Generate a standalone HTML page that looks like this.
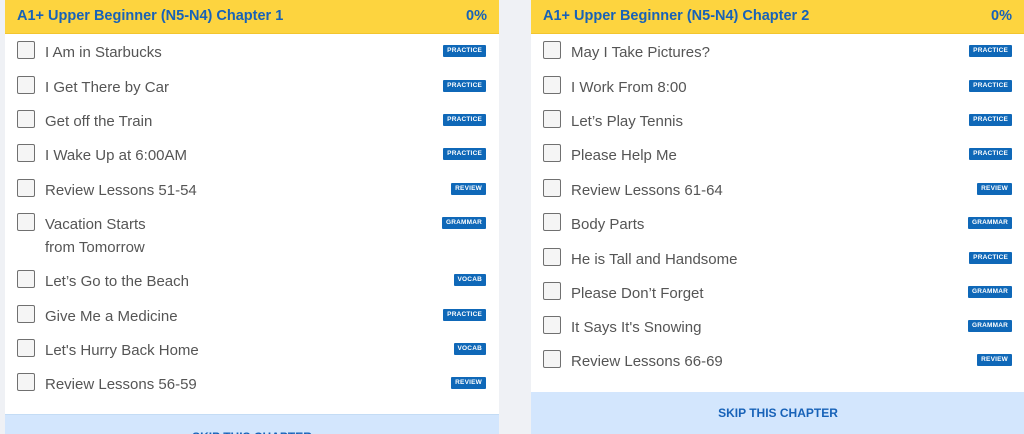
<!DOCTYPE html><html style="width:1024px;height:434px;overflow:hidden"><head><style>
body{margin:0;width:1024px;height:434px;background:#eff1f5;overflow:hidden;font-family:"Liberation Sans",sans-serif;position:relative}
.p{position:absolute;top:0;background:#fff;height:434px;overflow:hidden}
.h{position:absolute;left:0;right:0;top:0;height:33px;background:#fdd43f;border-bottom:1px solid #f3c52e;color:#1762b8;font-weight:bold;font-size:14.5px;line-height:33px}
.h .t{position:absolute;left:12px}.h .r{position:absolute;right:12px}
.row{position:absolute;left:0;right:0}
.cb{position:absolute;left:12px;width:16px;height:16px;border:1.5px solid #707070;border-radius:2px;background:#f5f5f5}
.tx{position:absolute;left:40px;font-size:15px;color:#555;line-height:23px}
.b{position:absolute;background:#0f68b8;color:#fff;font-size:6.5px;font-weight:bold;height:12px;line-height:12px;padding:0 4px;border-radius:1px;letter-spacing:.2px}
.sk{position:absolute;left:0;right:0;background:#d3e6fd;color:#1762b8;font-weight:bold;font-size:12px;text-align:center}
</style></head><body>
<div class="p" style="left:5px;width:494px">
<div class="h"><span class="t">A1+ Upper Beginner (N5-N4) Chapter 1</span><span class="r">0%</span></div>
<div class="row" style="top:41px"><div class="cb"></div><div class="tx" style="top:0px">I Am in Starbucks</div><div class="b" style="right:13px;top:4px">PRACTICE</div></div>
<div class="row" style="top:76px"><div class="cb"></div><div class="tx" style="top:0px">I Get There by Car</div><div class="b" style="right:13px;top:4px">PRACTICE</div></div>
<div class="row" style="top:110px"><div class="cb"></div><div class="tx" style="top:0px">Get off the Train</div><div class="b" style="right:13px;top:4px">PRACTICE</div></div>
<div class="row" style="top:144px"><div class="cb"></div><div class="tx" style="top:0px">I Wake Up at 6:00AM</div><div class="b" style="right:13px;top:4px">PRACTICE</div></div>
<div class="row" style="top:179px"><div class="cb"></div><div class="tx" style="top:0px">Review Lessons 51-54</div><div class="b" style="right:13px;top:4px">REVIEW</div></div>
<div class="row" style="top:213px"><div class="cb"></div><div class="tx" style="top:0px">Vacation Starts<br>from Tomorrow</div><div class="b" style="right:13px;top:4px">GRAMMAR</div></div>
<div class="row" style="top:270px"><div class="cb"></div><div class="tx" style="top:0px">Let’s Go to the Beach</div><div class="b" style="right:13px;top:4px">VOCAB</div></div>
<div class="row" style="top:305px"><div class="cb"></div><div class="tx" style="top:0px">Give Me a Medicine</div><div class="b" style="right:13px;top:4px">PRACTICE</div></div>
<div class="row" style="top:339px"><div class="cb"></div><div class="tx" style="top:0px">Let's Hurry Back Home</div><div class="b" style="right:13px;top:4px">VOCAB</div></div>
<div class="row" style="top:373px"><div class="cb"></div><div class="tx" style="top:0px">Review Lessons 56-59</div><div class="b" style="right:13px;top:4px">REVIEW</div></div>
<div class="sk" style="top:414px;height:30px;border-top:1px solid #c4dcf5;line-height:44px">SKIP THIS CHAPTER</div>
</div>
<div class="p" style="left:531px;width:494px">
<div class="h"><span class="t">A1+ Upper Beginner (N5-N4) Chapter 2</span><span class="r" style="right:13px">0%</span></div>
<div class="row" style="top:41px"><div class="cb"></div><div class="tx" style="top:0px">May I Take Pictures?</div><div class="b" style="right:13px;top:4px">PRACTICE</div></div>
<div class="row" style="top:76px"><div class="cb"></div><div class="tx" style="top:0px">I Work From 8:00</div><div class="b" style="right:13px;top:4px">PRACTICE</div></div>
<div class="row" style="top:110px"><div class="cb"></div><div class="tx" style="top:0px">Let’s Play Tennis</div><div class="b" style="right:13px;top:4px">PRACTICE</div></div>
<div class="row" style="top:144px"><div class="cb"></div><div class="tx" style="top:0px">Please Help Me</div><div class="b" style="right:13px;top:4px">PRACTICE</div></div>
<div class="row" style="top:179px"><div class="cb"></div><div class="tx" style="top:0px">Review Lessons 61-64</div><div class="b" style="right:13px;top:4px">REVIEW</div></div>
<div class="row" style="top:213px"><div class="cb"></div><div class="tx" style="top:0px">Body Parts</div><div class="b" style="right:13px;top:4px">GRAMMAR</div></div>
<div class="row" style="top:248px"><div class="cb"></div><div class="tx" style="top:0px">He is Tall and Handsome</div><div class="b" style="right:13px;top:4px">PRACTICE</div></div>
<div class="row" style="top:282px"><div class="cb"></div><div class="tx" style="top:0px">Please Don’t Forget</div><div class="b" style="right:13px;top:4px">GRAMMAR</div></div>
<div class="row" style="top:316px"><div class="cb"></div><div class="tx" style="top:0px">It Says It's Snowing</div><div class="b" style="right:13px;top:4px">GRAMMAR</div></div>
<div class="row" style="top:350px"><div class="cb"></div><div class="tx" style="top:0px">Review Lessons 66-69</div><div class="b" style="right:13px;top:4px">REVIEW</div></div>
<div class="sk" style="top:392px;height:42px;line-height:42px">SKIP THIS CHAPTER</div>
</div>
</body></html>
